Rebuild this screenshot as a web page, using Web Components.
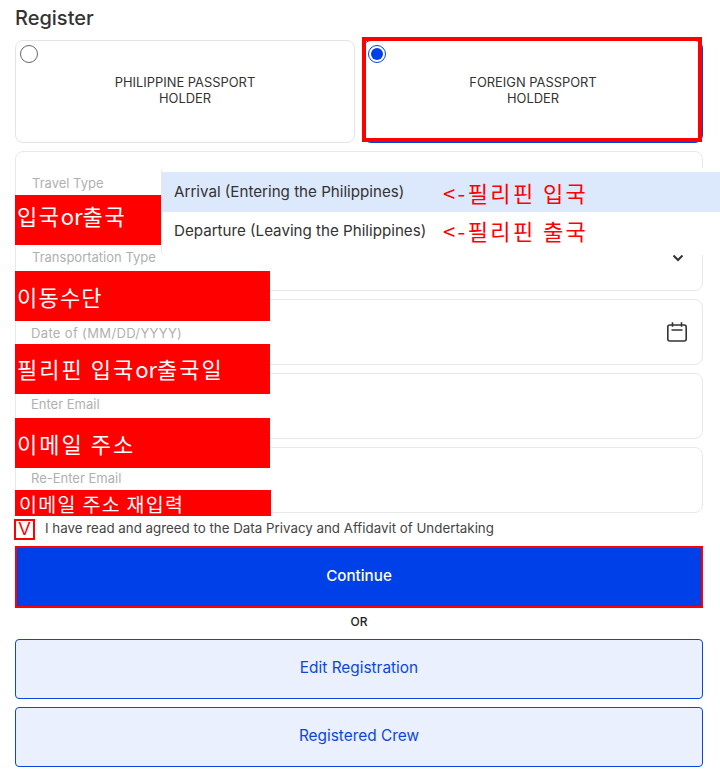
<!DOCTYPE html>
<html>
<head>
<meta charset="utf-8">
<title>Register</title>
<style>
    html, body { margin: 0; padding: 0; background: white; }
    body { font-family: Inter, "Noto Sans CJK KR", sans-serif; color: #333; }
</style>
</head>
<body>
<register-page></register-page>

<script>
const KOREAN = '"Noto Sans CJK KR", "Liberation Sans", sans-serif'

class PassportCard extends HTMLElement {
    constructor() {
        super()
        this.attachShadow({ mode: 'open' })
        const selected = this.hasAttribute('selected')
        this.shadowRoot.innerHTML = `
            <style>
                :host {
                    display: block;
                    position: relative;
                    box-sizing: border-box;
                    height: 103px;
                    border: 1px solid ${selected ? '#0040e8' : '#e4e4e4'};
                    border-radius: 8px;
                    background: white;
                }
                .radio {
                    position: absolute;
                    top: 4px;
                    left: 4px;
                    box-sizing: border-box;
                    width: 18px;
                    height: 18px;
                    border-radius: 50%;
                    border: 1px solid ${selected ? '#0040e8' : '#666'};
                    display: flex;
                    align-items: center;
                    justify-content: center;
                }
                .radio.on::after {
                    content: '';
                    width: 12px;
                    height: 12px;
                    border-radius: 50%;
                    background: #0040e8;
                }
                .text {
                    padding-top: 34px;
                    text-align: center;
                    font-size: 12.9px;
                    line-height: 16px;
                    color: #333;
                }
                .mark {
                    position: absolute;
                    top: -4px;
                    left: -2px;
                    right: 0;
                    bottom: 0;
                    border: 4px solid #ff0000;
                }
            </style>
            <div class="radio ${selected ? 'on' : ''}"></div>
            <div class="text"><slot></slot></div>
            ${selected ? '<div class="mark"></div>' : ''}
        `
    }
}

class FormField extends HTMLElement {
    constructor() {
        super()
        this.attachShadow({ mode: 'open' })
        this.shadowRoot.innerHTML = `
            <style>
                :host {
                    display: block;
                    position: relative;
                    box-sizing: border-box;
                    height: 66px;
                    border: 1px solid #e8e8e8;
                    border-radius: 8px;
                }
                .label {
                    position: absolute;
                    left: var(--label-left, 16px);
                    top: var(--label-top, 23px);
                    font-size: 13px;
                    line-height: 16px;
                    color: #b0b0b0;
                    white-space: nowrap;
                }
                .icon {
                    position: absolute;
                    right: var(--icon-right, 14px);
                    top: 0;
                    bottom: 0;
                    display: flex;
                    align-items: center;
                }
            </style>
            <div class="label"><slot name="label"></slot></div>
            <div class="icon"><slot name="icon"></slot></div>
            <slot></slot>
        `
    }
}

class NoteBox extends HTMLElement {
    constructor() {
        super()
        this.attachShadow({ mode: 'open' })
        this.shadowRoot.innerHTML = `
            <style>
                :host {
                    position: absolute;
                    z-index: 1;
                    left: -1px;
                    top: var(--note-top, 43px);
                    box-sizing: border-box;
                    width: var(--note-width, 255px);
                    height: var(--note-height, 50px);
                    background: #ff0000;
                    color: white;
                    padding-left: var(--note-pad, 2px);
                    padding-bottom: var(--note-lift, 0);
                    display: flex;
                    align-items: center;
                    font-family: ${KOREAN};
                    font-size: var(--note-size, 22px);
                    white-space: nowrap;
                    letter-spacing: var(--note-spacing, 2px);
                }
            </style>
            <div><slot></slot></div>
        `
    }
}

class TravelMenu extends HTMLElement {
    constructor() {
        super()
        this.attachShadow({ mode: 'open' })
        this.shadowRoot.innerHTML = `
            <style>
                :host {
                    position: absolute;
                    z-index: 2;
                    left: 161px;
                    right: 0;
                    top: 168px;
                    height: 87px;
                    box-sizing: border-box;
                    padding-top: 4px;
                    background: white;
                    border-left: 1px solid #e8e8e8;
                    border-radius: 4px 0 0 4px;
                }
                .item {
                    display: flex;
                    align-items: center;
                    height: 40px;
                    padding-left: 12px;
                    font-size: 15.15px;
                    color: #333;
                    white-space: nowrap;
                }
                .item.active {
                    background: #dce8fc;
                }
                .item.second {
                    height: 38px;
                }
                .text {
                    width: 269px;
                    margin-top: -2px;
                }
                .note {
                    font-family: ${KOREAN};
                    font-size: 22px;
                    letter-spacing: 2.4px;
                    color: #ff0000;
                }
                .second .note {
                    margin-top: -2px;
                }
            </style>
            <div class="item active"><span class="text">Arrival (Entering the Philippines)</span><span class="note">&lt;-필리핀 입국</span></div>
            <div class="item second"><span class="text">Departure (Leaving the Philippines)</span><span class="note">&lt;-필리핀 출국</span></div>
        `
    }
}

class AgreeRow extends HTMLElement {
    constructor() {
        super()
        this.attachShadow({ mode: 'open' })
        this.shadowRoot.innerHTML = `
            <style>
                :host {
                    display: flex;
                    align-items: center;
                    gap: 10px;
                    height: 22px;
                    margin-left: -1px;
                }
                .box {
                    box-sizing: border-box;
                    width: 21px;
                    height: 21px;
                    border: 2px solid #ff0000;
                    color: #ff0000;
                    font-family: "Liberation Sans", sans-serif;
                    font-size: 18px;
                    line-height: 17px;
                    text-align: center;
                }
                .text {
                    margin-top: -2px;
                    font-size: 13.33px;
                    color: #444;
                    white-space: nowrap;
                }
            </style>
            <div class="box">V</div>
            <div class="text"><slot></slot></div>
        `
    }
}

class ActionButton extends HTMLElement {
    constructor() {
        super()
        this.attachShadow({ mode: 'open' })
        this.shadowRoot.innerHTML = `
            <style>
                :host {
                    display: flex;
                    align-items: center;
                    justify-content: center;
                    box-sizing: border-box;
                    height: 60px;
                    padding-bottom: 4px;
                    border-radius: 4px;
                    border: 1px solid #0a47e0;
                    background: #eaf0fd;
                    color: #0a47e0;
                    font-size: 15.4px;
                    cursor: pointer;
                }
                :host([primary]) {
                    height: 62px;
                    border: 2px solid #ff0000;
                    border-radius: 0;
                    background: #0040e8;
                    color: white;
                    font-size: 15.2px;
                    font-weight: 500;
                }
            </style>
            <slot></slot>
        `
    }
}

class RegisterPage extends HTMLElement {
    constructor() {
        super()
        this.attachShadow({ mode: 'open' })
        this.shadowRoot.innerHTML = `
            <style>
                :host {
                    display: block;
                    position: relative;
                    box-sizing: border-box;
                    width: 720px;
                    height: 776px;
                    overflow: hidden;
                    padding: 6px 17px 0 15px;
                    font-family: Inter, "Noto Sans CJK KR", sans-serif;
                }
                h1 {
                    margin: 0;
                    height: 34px;
                    font-size: 20px;
                    line-height: 24px;
                    font-weight: 500;
                    color: #333;
                }
                .cards {
                    display: grid;
                    grid-template-columns: 340px 340px;
                    gap: 8px;
                    margin-bottom: 8px;
                }
                .fields {
                    display: flex;
                    flex-direction: column;
                    gap: 8px;
                }
                .agree {
                    margin-top: 5px;
                }
                .or {
                    height: 31px;
                    padding-bottom: 4px;
                    box-sizing: border-box;
                    display: flex;
                    align-items: center;
                    justify-content: center;
                    font-size: 12px;
                    font-weight: 500;
                    color: #222;
                }
                .primary {
                    margin-top: 6px;
                }
                .second {
                    margin-top: 8px;
                }
                .latin {
                    letter-spacing: 0;
                }
                svg {
                    display: block;
                }
            </style>
            <h1>Register</h1>
            <div class="cards">
                <passport-card>PHILIPPINE PASSPORT<br>HOLDER</passport-card>
                <passport-card selected>FOREIGN PASSPORT<br>HOLDER</passport-card>
            </div>
            <div class="fields">
                <form-field>
                    <span slot="label">Travel Type</span>
                    <note-box style="--note-lift:10px;--note-spacing:1.6px">입국<span class="latin">or</span>출국</note-box>
                </form-field>
                <form-field>
                    <span slot="label">Transportation Type</span>
                    <svg slot="icon" width="20" height="20" viewBox="0 0 20 20" fill="none" stroke="#333" stroke-width="2"><path d="M5.5 7.5 10 12l4.5-4.5"/></svg>
                    <note-box style="--note-top:45px;--note-spacing:1.2px">이동수단</note-box>
                </form-field>
                <form-field style="--label-top:25px;--label-left:15px;--icon-right:15px">
                    <span slot="label" style="letter-spacing:.35px">Date of (MM/DD/YYYY)</span>
                    <svg slot="icon" width="20" height="20" viewBox="0 0 20 20" fill="none" stroke="#333" stroke-width="1.6"><rect x="0.8" y="3" width="18.4" height="16" rx="2"/><path d="M5.5 0.2v4.5M14.5 0.2v4.5M4.5 8h11" /></svg>
                    <note-box style="--note-top:44px;--note-lift:2px">필리핀 입국<span class="latin">or</span>출국일</note-box>
                </form-field>
                <form-field style="--label-top:22px;--label-left:15px">
                    <span slot="label">Enter Email</span>
                    <note-box style="--note-top:44px">이메일 주소</note-box>
                </form-field>
                <form-field style="--label-top:22px;--label-left:15px">
                    <span slot="label">Re-Enter Email</span>
                    <note-box style="--note-top:42px;--note-height:26px;--note-width:256px;--note-size:19.5px;--note-pad:4px;--note-spacing:1.3px">이메일 주소 재입력</note-box>
                </form-field>
            </div>
            <agree-row class="agree">I have read and agreed to the Data Privacy and Affidavit of Undertaking</agree-row>
            <action-button primary class="primary">Continue</action-button>
            <div class="or">OR</div>
            <action-button>Edit Registration</action-button>
            <action-button class="second">Registered Crew</action-button>
            <travel-menu></travel-menu>
        `
    }
}

customElements.define('passport-card', PassportCard)
customElements.define('form-field', FormField)
customElements.define('note-box', NoteBox)
customElements.define('travel-menu', TravelMenu)
customElements.define('agree-row', AgreeRow)
customElements.define('action-button', ActionButton)
customElements.define('register-page', RegisterPage)
</script>
</body>
</html>
